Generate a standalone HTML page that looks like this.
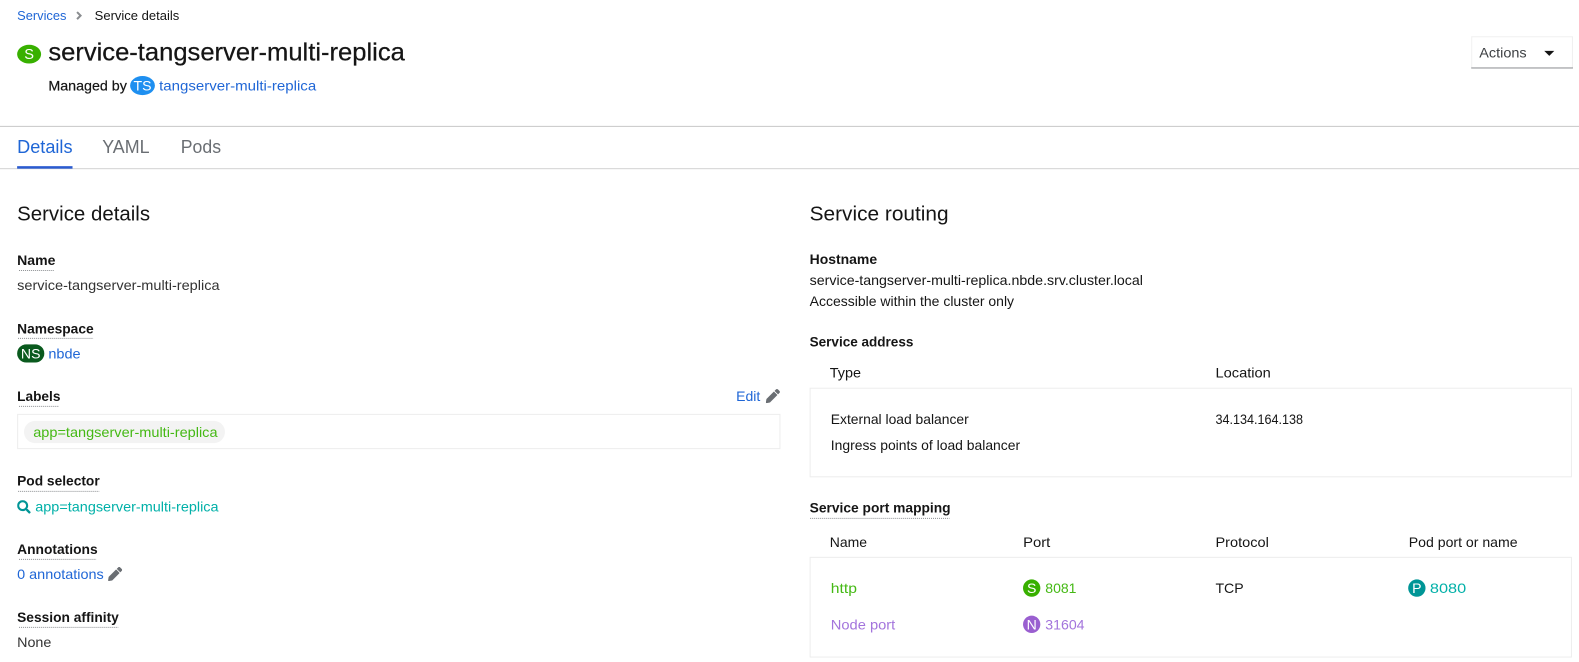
<!DOCTYPE html>
<html><head><meta charset="utf-8"><style>
html,body{margin:0;padding:0;background:#fff;width:1579px;height:662px;overflow:hidden}
svg{display:block}
text{font-family:"Liberation Sans",sans-serif;font-size:14px;fill:#151515}
.b{font-weight:700;font-size:14px}
.l{fill:#1f66d6}
.g{fill:#45b915}
.t{fill:#00b0a8}
.p{fill:#a374dc}
.w{fill:#fff;text-anchor:middle}
.d{stroke:#8a8d90;stroke-width:1;stroke-dasharray:1 1;fill:none}
.r{fill:#fff;stroke:#ededed;stroke-width:1}
</style></head><body>
<svg width="1579" height="662" viewBox="0 0 1568 657.4" xmlns="http://www.w3.org/2000/svg">
<rect width="1579" height="662" fill="#fff"/>
<!-- breadcrumb -->
<text x="17" y="20" style="font-size:13px" class="l" textLength="49" lengthAdjust="spacingAndGlyphs">Services</text>
<path d="M76.500 12l3.500 3.500-3.500 3.500" fill="none" stroke="#8a8d90" stroke-width="2"/>
<text x="94" y="20" style="font-size:13px" textLength="84" lengthAdjust="spacingAndGlyphs">Service details</text>
<!-- title -->
<ellipse cx="28.900" cy="53.800" rx="11.900" ry="9.300" fill="#38b000"/>
<text x="28.900" y="58.800" class="w" style="font-size:14.500px">S</text>
<text x="48" y="60" style="font-size:25px;stroke:#151515;stroke-width:.25" textLength="354" lengthAdjust="spacingAndGlyphs">service-tangserver-multi-replica</text>
<text x="48" y="90" style="font-size:14px;stroke:#151515;stroke-width:.2" textLength="78" lengthAdjust="spacingAndGlyphs">Managed by</text>
<ellipse cx="141.500" cy="85" rx="12.300" ry="9.500" fill="#1e8ff0"/>
<text x="141.500" y="90" class="w" style="font-size:14px">TS</text>
<text x="158" y="90" class="l" textLength="156" lengthAdjust="spacingAndGlyphs">tangserver-multi-replica</text>
<!-- actions -->
<rect x="1461.500" y="36.500" width="100" height="31" fill="#fff" stroke="#f0f0f0"/>
<rect x="1461" y="67" width="101" height="1" fill="#8a8d90"/>
<text x="1469" y="57" style="font-size:14px;fill:#3c3f42" textLength="47" lengthAdjust="spacingAndGlyphs">Actions</text>
<path d="M1533.500 50.500h10l-5 5z" fill="#151515"/>
<!-- tabs -->
<rect x="0" y="125" width="1579" height="1" fill="#c7c7c7"/>
<rect x="0" y="167" width="1579" height="1" fill="#d2d2d2"/>
<text x="17" y="152" style="font-size:18px" class="l" textLength="55" lengthAdjust="spacingAndGlyphs">Details</text>
<rect x="17" y="165" width="55" height="2.500" fill="#2b5bd0"/>
<text x="101.500" y="152" style="font-size:18px;fill:#6a6e73" textLength="47" lengthAdjust="spacingAndGlyphs">YAML</text>
<text x="179.500" y="152" style="font-size:18px;fill:#6a6e73" textLength="40" lengthAdjust="spacingAndGlyphs">Pods</text>
<!-- left -->
<text x="17" y="219" style="font-size:20px" textLength="132" lengthAdjust="spacingAndGlyphs">Service details</text>
<text x="17" y="263" class="b" textLength="38" lengthAdjust="spacingAndGlyphs">Name</text>
<path class="d" d="M18.900 268.600h34.700"/>
<text x="17" y="288" textLength="201" lengthAdjust="spacingAndGlyphs" style="fill:#333">service-tangserver-multi-replica</text>
<text x="17" y="331" class="b" textLength="76" lengthAdjust="spacingAndGlyphs">Namespace</text>
<path class="d" d="M17.900 336h74.500"/>
<rect x="17" y="342" width="27" height="18" rx="9" fill="#0a5a1e"/>
<text x="30.500" y="356" class="w" style="font-size:14px">NS</text>
<text x="48" y="356" class="l" textLength="32" lengthAdjust="spacingAndGlyphs">nbde</text>
<text x="17" y="398" class="b" textLength="43" lengthAdjust="spacingAndGlyphs">Labels</text>
<path class="d" d="M18.900 403.500h40"/>
<text x="731" y="398" class="l" textLength="24" lengthAdjust="spacingAndGlyphs">Edit</text>
<svg x="760.500" y="386.300" width="14" height="14" viewBox="0 0 512 512"><path fill="#6a6e73" d="M497.900 142.100l-46.100 46.100c-4.700 4.700-12.300 4.700-17 0l-111-111c-4.700-4.700-4.700-12.300 0-17l46.100-46.100c18.700-18.700 49.100-18.700 67.900 0l60.100 60.100c18.800 18.700 18.800 49.100 0 67.900zM284.200 99.800L21.600 362.400.4 483.900c-2.900 16.400 11.400 30.600 27.800 27.800l121.500-21.300 262.600-262.600c4.700-4.700 4.700-12.300 0-17l-111-111c-4.800-4.700-12.400-4.700-17.100 0z"/></svg>
<rect class="r" x="17.500" y="411.500" width="757" height="34"/>
<rect x="23.800" y="418" width="199.600" height="22" rx="11" fill="#f3f3f3"/>
<text x="33" y="434" class="g" textLength="183" lengthAdjust="spacingAndGlyphs">app=tangserver-multi-replica</text>
<text x="17" y="482" class="b" textLength="82" lengthAdjust="spacingAndGlyphs">Pod selector</text>
<path class="d" d="M18 488h80.500"/>
<svg x="17" y="496.600" width="13.500" height="13.500" viewBox="0 0 512 512"><path fill="#009596" d="M505 442.700L405.300 343c-4.500-4.500-10.600-7-17-7H372c27.600-35.300 44-79.700 44-128C416 93.100 322.900 0 208 0S0 93.100 0 208s93.100 208 208 208c48.300 0 92.700-16.400 128-44v16.300c0 6.400 2.500 12.500 7 17l99.700 99.700c9.400 9.400 24.600 9.400 33.900 0l28.300-28.300c9.400-9.400 9.400-24.600.1-34zM208 336c-70.700 0-128-57.200-128-128 0-70.700 57.200-128 128-128 70.700 0 128 57.200 128 128 0 70.700-57.200 128-128 128z"/></svg>
<text x="35" y="508" class="t" textLength="182" lengthAdjust="spacingAndGlyphs">app=tangserver-multi-replica</text>
<text x="17" y="550" class="b" textLength="80" lengthAdjust="spacingAndGlyphs">Annotations</text>
<path class="d" d="M18.900 555.500h76.500"/>
<text x="17" y="575" class="l" textLength="86" lengthAdjust="spacingAndGlyphs">0 annotations</text>
<svg x="107.300" y="563" width="14" height="14" viewBox="0 0 512 512"><path fill="#6a6e73" d="M497.900 142.100l-46.100 46.100c-4.700 4.700-12.300 4.700-17 0l-111-111c-4.700-4.700-4.700-12.300 0-17l46.100-46.100c18.700-18.700 49.100-18.700 67.900 0l60.100 60.100c18.800 18.700 18.800 49.100 0 67.900zM284.200 99.800L21.600 362.400.4 483.900c-2.900 16.400 11.400 30.600 27.800 27.800l121.500-21.300 262.600-262.600c4.700-4.700 4.700-12.300 0-17l-111-111c-4.800-4.700-12.400-4.700-17.100 0z"/></svg>
<text x="17" y="617.500" class="b" textLength="101" lengthAdjust="spacingAndGlyphs">Session affinity</text>
<path class="d" d="M18.900 623h98.500"/>
<text x="17" y="642.500" textLength="34" lengthAdjust="spacingAndGlyphs" style="fill:#333">None</text>
<!-- right -->
<text x="804" y="219" style="font-size:20px" textLength="138" lengthAdjust="spacingAndGlyphs">Service routing</text>
<text x="804" y="262" class="b" textLength="67" lengthAdjust="spacingAndGlyphs">Hostname</text>
<text x="804" y="283" textLength="331" lengthAdjust="spacingAndGlyphs">service-tangserver-multi-replica.nbde.srv.cluster.local</text>
<text x="804" y="304" textLength="203" lengthAdjust="spacingAndGlyphs">Accessible within the cluster only</text>
<text x="804" y="344" class="b" textLength="103" lengthAdjust="spacingAndGlyphs">Service address</text>
<text x="824" y="375" textLength="31" lengthAdjust="spacingAndGlyphs">Type</text>
<text x="1207" y="375" textLength="55" lengthAdjust="spacingAndGlyphs">Location</text>
<rect class="r" x="804.500" y="385.500" width="756" height="88"/>
<text x="825" y="421" textLength="137" lengthAdjust="spacingAndGlyphs">External load balancer</text>
<text x="825" y="447" textLength="188" lengthAdjust="spacingAndGlyphs">Ingress points of load balancer</text>
<text x="1207" y="421" textLength="87" lengthAdjust="spacingAndGlyphs">34.134.164.138</text>
<text x="804" y="509" class="b" textLength="140" lengthAdjust="spacingAndGlyphs">Service port mapping</text>
<path class="d" d="M804.500 514.800h138.500"/>
<text x="824" y="543" textLength="37" lengthAdjust="spacingAndGlyphs">Name</text>
<text x="1016" y="543" textLength="27" lengthAdjust="spacingAndGlyphs">Port</text>
<text x="1207" y="543" textLength="53" lengthAdjust="spacingAndGlyphs">Protocol</text>
<text x="1399" y="543" textLength="108" lengthAdjust="spacingAndGlyphs">Pod port or name</text>
<rect class="r" x="804.500" y="553.500" width="756" height="99"/>
<text x="825" y="589" class="g" textLength="26" lengthAdjust="spacingAndGlyphs">http</text>
<text x="825" y="625" class="p" textLength="64" lengthAdjust="spacingAndGlyphs">Node port</text>
<circle cx="1024.500" cy="584" r="8.600" fill="#38b000"/>
<text x="1024.500" y="589" class="w" style="font-size:14px">S</text>
<text x="1038" y="589" class="g" textLength="31" lengthAdjust="spacingAndGlyphs">8081</text>
<circle cx="1024.500" cy="620" r="8.600" fill="#9a5fd0"/>
<text x="1024.500" y="625" class="w" style="font-size:14px">N</text>
<text x="1038" y="625" class="p" textLength="39" lengthAdjust="spacingAndGlyphs">31604</text>
<text x="1207" y="589" textLength="28" lengthAdjust="spacingAndGlyphs">TCP</text>
<circle cx="1407" cy="584" r="8.600" fill="#009596"/>
<text x="1407" y="589" class="w" style="font-size:14px">P</text>
<text x="1420" y="589" class="t" textLength="36" lengthAdjust="spacingAndGlyphs">8080</text>
</svg>
</body></html>
